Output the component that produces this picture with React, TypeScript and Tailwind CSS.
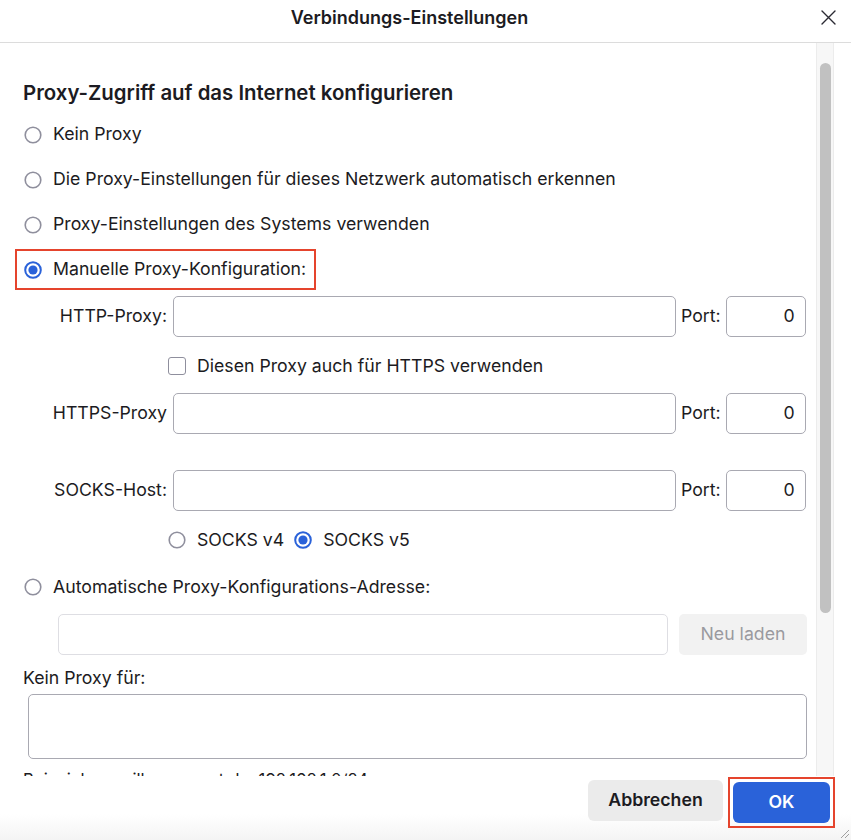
import { ReactNode } from "react";

const font = { fontFamily: "Inter, 'Noto Sans', sans-serif" };

const Radio = ({ checked }: { checked?: boolean }) => (
  <svg width="18" height="18" viewBox="0 0 18 18" className="shrink-0">
    <circle
      cx="9"
      cy="9"
      r="7.8"
      fill="white"
      stroke={checked ? "#2a62d9" : "#8f8f9d"}
      strokeWidth={checked ? 2 : 1.6}
    />
    {checked && <circle cx="9" cy="9" r="4.6" fill="#2a62d9" />}
  </svg>
);

const Checkbox = () => (
  <span className="block w-[18px] h-[18px] shrink-0 rounded-[3px] border-[1.6px] border-[#8f8f9d] bg-white" />
);

const RadioRow = ({
  label,
  checked,
  className = "",
}: {
  label: string;
  checked?: boolean;
  className?: string;
}) => (
  <div className={`flex items-center gap-[11px] ${className}`}>
    <Radio checked={checked} />
    <span>{label}</span>
  </div>
);

const Field = ({ className = "", children }: { className?: string; children?: ReactNode }) => (
  <div
    className={`h-[41px] shrink-0 rounded-[5px] border border-[#a9a9b2] bg-white flex items-center justify-end px-[10px] ${className}`}
  >
    {children}
  </div>
);

const ProxyRow = ({ label }: { label: string }) => (
  <div className="flex items-center h-[41px]">
    <span className="w-[144px] shrink-0 text-right whitespace-nowrap">{label}</span>
    <Field className="ml-[6px] w-[503px]" />
    <span className="ml-[5px]">Port:</span>
    <Field className="ml-[5px] w-[80px]">0</Field>
  </div>
);

export default function App() {
  return (
    <div
      className="w-[851px] h-[840px] flex flex-col bg-white text-[#1c1b22] text-[17.7px] overflow-hidden"
      style={font}
    >
      {/* title bar */}
      <div className="relative h-[43px] shrink-0 border-b border-[#dcdcdc] flex items-center justify-center pr-[32px]">
        <span className="font-semibold text-[18px] -mt-[8px]">Verbindungs-Einstellungen</span>
        <svg
          className="absolute right-[14px] top-[9px]"
          width="17"
          height="17"
          viewBox="0 0 17 17"
          stroke="#2b2a33"
          strokeWidth="1.4"
          strokeLinecap="round"
        >
          <path d="M2 2 L15 15 M15 2 L2 15" />
        </svg>
      </div>

      {/* scrollable body */}
      <div className="relative flex-1 min-h-0 flex overflow-hidden">
        <div className="w-[816px] shrink-0 pl-[23px] overflow-hidden">
          <h2 className="mt-[38px] h-[24px] leading-[24px] text-[20.4px] font-semibold whitespace-nowrap">
            Proxy-Zugriff auf das Internet konfigurieren
          </h2>

          <div className="mt-[7px] pl-[1px]">
            <RadioRow label="Kein Proxy" className="h-[45px]" />
            <RadioRow label="Die Proxy-Einstellungen für dieses Netzwerk automatisch erkennen" className="h-[45px]" />
            <RadioRow label="Proxy-Einstellungen des Systems verwenden" className="h-[45px]" />
            <div className="h-[45px] flex items-center">
              <div className="-ml-[9px] h-[41px] pl-[7px] pr-[8px] flex items-center gap-[11px] border-2 border-[#e5442d]">
                <Radio checked />
                <span>Manuelle Proxy-Konfiguration:</span>
              </div>
            </div>
          </div>

          <div className="mt-[4px]">
            <ProxyRow label="HTTP-Proxy:" />
            <div className="h-[56px] flex items-center gap-[11px] pl-[145px] pt-[2px]">
              <Checkbox />
              <span>Diesen Proxy auch für HTTPS verwenden</span>
            </div>
            <ProxyRow label="HTTPS-Proxy" />
            <div className="h-[36px]" />
            <ProxyRow label="SOCKS-Host:" />
            <div className="h-[58px] flex items-center pl-[145px]">
              <RadioRow label="SOCKS v4" />
              <RadioRow label="SOCKS v5" checked className="ml-[10px]" />
            </div>
          </div>

          <RadioRow label="Automatische Proxy-Konfigurations-Adresse:" className="h-[36px] pl-[1px]" />

          <div className="mt-[9px] flex items-center pl-[35px]">
            <div className="h-[41px] w-[610px] shrink-0 rounded-[5px] border border-[#dedee3] bg-white" />
            <div className="ml-[11px] h-[41px] w-[128px] shrink-0 rounded-[5px] bg-[#f2f2f2] text-[#9a9a9f] flex items-center justify-center">
              Neu laden
            </div>
          </div>

          <div className="mt-[11px] h-[24px] leading-[24px]">Kein Proxy für:</div>
          <div className="mt-[4px] ml-[5px] h-[65px] w-[779px] rounded-[5px] border border-[#a9a9b2]" />
          <div className="mt-[9px] h-[24px] leading-[24px] text-[16.7px] whitespace-nowrap">
            Beispiel: .mozilla.org, .net.de, 192.168.1.0/24
          </div>
        </div>

        {/* scrollbar */}
        <div className="w-[18px] shrink-0 bg-[#f7f7f7] border-x border-[#ececec] pt-[20px]">
          <div className="mx-auto w-[11px] h-[550px] rounded-full bg-[#c1c1c1]" />
        </div>
      </div>

      {/* buttons */}
      <div className="relative h-[64px] shrink-0 bg-gradient-to-b from-white from-60% to-[#f4f4f4] flex items-start justify-end pr-[16px] pt-[4px]">
        <button className="h-[41px] w-[135px] rounded-[6px] bg-[#ebebeb] font-semibold text-[17.7px] text-[#1c1b22]">
          Abbrechen
        </button>
        <div className="ml-[5px] -mt-[3px] p-[3px] border-2 border-[#e5442d]">
          <button className="h-[41px] w-[97px] rounded-[6px] bg-[#2a62d9] font-semibold text-[17.7px] text-white">
            OK
          </button>
        </div>
        <svg className="absolute right-[1px] bottom-[1px]" width="12" height="12" viewBox="0 0 12 12" stroke="#a0a0a0" strokeWidth="1">
          <path d="M11 3 L3 11 M11 7 L7 11" />
        </svg>
      </div>
    </div>
  );
}
